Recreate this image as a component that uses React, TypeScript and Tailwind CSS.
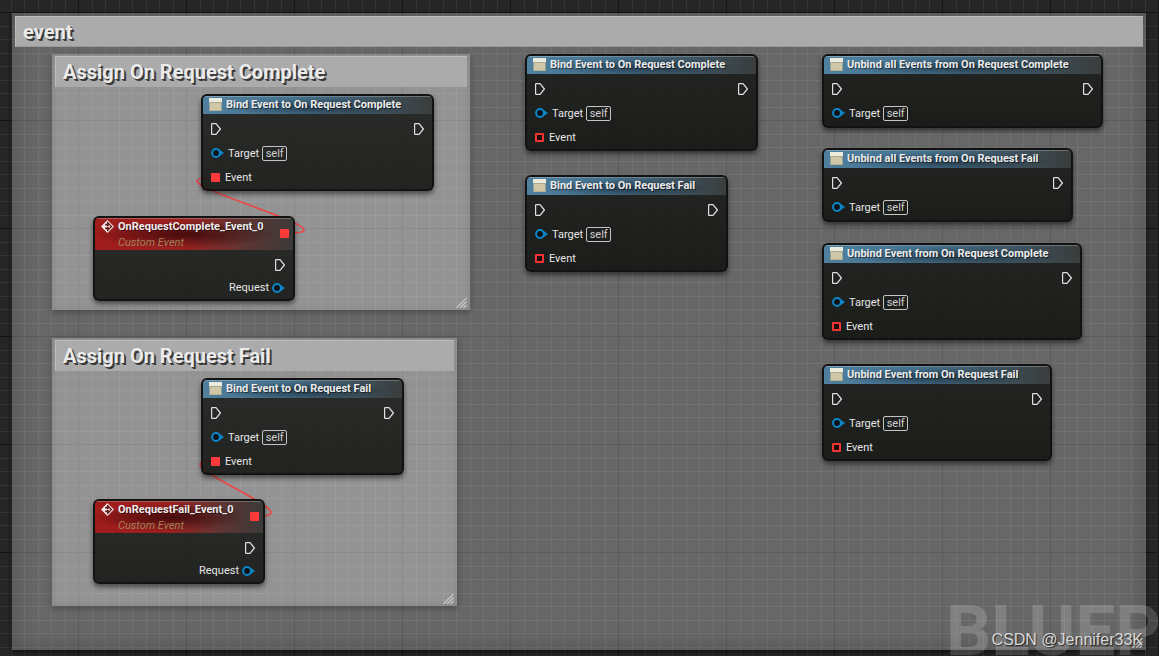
import React from "react";
import clsx from "clsx";

type CommentBoxProps = {
	title: string;
	className: string;
	nested?: boolean;
};

type CallNodeProps = {
	title: string;
	className: string;
	event?: "open" | "linked";
};

type EventNodeProps = {
	title: string;
	className: string;
};

// minor grid lines inside one 108px major cell
const MINOR = [14, 27, 41, 54, 68, 81, 95];

const Grid: React.FC = () => (
	<svg className="absolute inset-0 h-full w-full" aria-hidden="true">
		<defs>
			<pattern id="grid" x="78" y="12" width="108" height="108" patternUnits="userSpaceOnUse">
				{MINOR.map((n) => (
					<g key={n} fill="#353535">
						<rect x={n} y="0" width="1" height="108" />
						<rect x="0" y={n} width="108" height="1" />
					</g>
				))}
				<rect width="1" height="108" fill="#151515" />
				<rect width="108" height="1" fill="#151515" />
			</pattern>
		</defs>
		<rect width="100%" height="100%" fill="url(#grid)" />
	</svg>
);

const Wires: React.FC = () => (
	<svg
		className="absolute inset-0 h-full w-full"
		fill="none"
		stroke="#f04444"
		strokeWidth="1.6"
		aria-hidden="true">
		<path d="M290 233 C360 233 141 178 211 178" />
		<path d="M260 516 C312 516 159 461 211 461" />
	</svg>
);

const ExecPin: React.FC = () => (
	<svg className="h-3 w-[10px] shrink-0" viewBox="0 0 10 12" aria-hidden="true">
		<path
			d="M0.6 1.2Q0.6 0.6 1.2 0.6H5L9.4 6L5 11.4H1.2Q0.6 11.4 0.6 10.8Z"
			fill="none"
			stroke="#e0e0e0"
			strokeWidth="1.2"
			strokeLinejoin="round"
		/>
	</svg>
);

const ObjectPin: React.FC = () => (
	<svg className="h-[10px] w-[13px] shrink-0" viewBox="0 0 13 10" aria-hidden="true">
		<path d="M8.5 1.8L13 5L8.5 8.2Z" fill="#0b86c8" />
		<circle cx="5" cy="5" r="3.9" fill="#0c1216" stroke="#0b86c8" strokeWidth="2" />
	</svg>
);

const DelegatePin: React.FC<{ linked?: boolean }> = ({ linked }) => (
	<span
		className={clsx(
			"block size-[9px] shrink-0 rounded-[1px]",
			linked ? "bg-[#ff3a3a]" : "border-2 border-[#f53535] bg-[#1c0b0b]"
		)}
	/>
);

const FunctionIcon: React.FC = () => (
	<svg className="mt-px h-[13px] w-[13px] shrink-0" viewBox="0 0 13 13" aria-hidden="true">
		<path d="M0 0H13V4H0Z" fill="#ebebe0" />
		<path d="M0 4H13V5H0Z" fill="#aaa891" />
		<path d="M0.5 5H12.5V13H0.5Z" fill="#cfc7a6" />
		<path d="M0.5 12H12.5V13H0.5Z" fill="#b9b18f" />
	</svg>
);

const EventIcon: React.FC = () => (
	<svg className="mt-px h-[13px] w-[13px] shrink-0" viewBox="0 0 13 13" aria-hidden="true">
		<path
			d="M6.5 0.8L12.2 6.5L6.5 12.2L0.8 6.5Z"
			fill="#5a1212"
			stroke="#ead4d4"
			strokeWidth="1.2"
		/>
		<path d="M6 1L0.5 6.5L6 12V9.2H4.2V7.4H6V5.6H4.2V3.8H6Z" fill="#f4e8e8" />
		<path d="M6 5.9H7.6V4.3L9.8 6.5L7.6 8.7V7.1H6Z" fill="#dcb4b4" />
	</svg>
);

const ResizeHandle: React.FC = () => (
	<svg
		className="absolute right-[3px] bottom-[2px] h-[10px] w-[11px]"
		viewBox="0 0 11 10"
		stroke="#c8c8c8"
		strokeWidth="1.2"
		aria-hidden="true">
		<path d="M0.5 10L10.5 0M4 10L10.5 3.5M7.5 10L10.5 7" />
	</svg>
);

const CommentBox: React.FC<CommentBoxProps> = ({ title, className, nested }) => (
	<section
		className={clsx(
			"absolute px-[3px]",
			nested
				? "bg-white/29 pt-[2px] shadow-[0_2px_6px_rgba(0,0,0,0.3),inset_0_0_5px_rgba(70,70,70,0.25)]"
				: "bg-white/30 pt-[3px] shadow-[0_2px_6px_rgba(0,0,0,0.6),inset_0_0_24px_rgba(30,30,30,0.3)]",
			className
		)}>
		<h2
			className={clsx(
				"h-[31px] border-t border-l border-[#bcbcbc] bg-[#ababab] pl-[7px] text-[20px] leading-[31px] font-bold text-[#ebebeb] [text-shadow:1px_1px_0_#3a3a3a,2px_2px_0_#3a3a3a]",
				!nested && "border-b border-b-[#9a9a9a]"
			)}>
			{title}
		</h2>
		<ResizeHandle />
	</section>
);

const NODE =
	"absolute overflow-hidden rounded-[6px] border-2 border-[#101110]/90 bg-linear-to-b from-[#191b19]/86 to-[#0f110e]/86 shadow-[0_3px_5px_rgba(0,0,0,0.5)]";

const CallNode: React.FC<CallNodeProps> = ({ title, className, event }) => (
	<article className={clsx(NODE, className)}>
		<header className="flex h-[18px] items-start gap-1 border-t border-white/25 bg-[radial-gradient(ellipse_at_50%_60%,rgba(16,28,38,0.6),transparent_60%),linear-gradient(to_right,#50809f,#44708c_40%,#3c4a52_85%,#3a3d3c)] pl-[6px]">
			<FunctionIcon />
			<h3 className="text-[11px] leading-4 font-bold whitespace-nowrap text-[#ececec] [text-shadow:1px_1px_0_rgba(0,0,0,0.5)]">
				{title}
			</h3>
		</header>
		<div className={clsx("px-2 pt-[3px] text-[11px] text-[#e6e6e6]", !event && "pb-px")}>
			<div className="flex h-6 items-center justify-between">
				<ExecPin />
				<ExecPin />
			</div>
			<div className="flex h-6 items-center">
				<ObjectPin />
				<span className="ml-1 pt-[2px]">Target</span>
				<span className="mt-px ml-[3px] flex h-[15px] w-[25px] items-center justify-center rounded-[2px] border border-[#c4c4c4] pt-[2px] text-[#d0d0d0]">
					self
				</span>
			</div>
			{event && (
				<div className="flex h-6 items-center gap-[5px]">
					<DelegatePin linked={event === "linked"} />
					<span className="pt-[2px]">Event</span>
				</div>
			)}
		</div>
	</article>
);

const EventNode: React.FC<EventNodeProps> = ({ title, className }) => (
	<article className={clsx(NODE, className)}>
		<header className="flex h-8 items-start justify-between border-t border-white/25 bg-[radial-gradient(ellipse_at_45%_50%,rgba(40,4,4,0.75),transparent_60%),linear-gradient(to_right,#a01c1c,#98201f_45%,#5e3533_75%,#3b3a39)] pr-1 pl-[6px]">
			<div className="flex gap-1">
				<EventIcon />
				<div className="text-[11px] leading-4 whitespace-nowrap">
					<h3 className="font-bold text-[#ececec] [text-shadow:1px_1px_0_rgba(0,0,0,0.5)]">{title}</h3>
					<p className="text-[#a5805a] italic">Custom Event</p>
				</div>
			</div>
			<div className="pt-[10px]">
				<DelegatePin linked />
			</div>
		</header>
		<div className="flex flex-col items-end px-2 pt-[3px] text-[11px] text-[#e6e6e6]">
			<div className="flex h-6 items-center">
				<ExecPin />
			</div>
			<div className="flex h-[22px] items-center gap-[3px]">
				<span className="pt-px">Request</span>
				<ObjectPin />
			</div>
		</div>
	</article>
);

export default function App() {
	return (
		<main className="relative h-screen w-full overflow-hidden bg-[#262626] font-[Roboto,sans-serif]">
			<Grid />

			<CommentBox title="event" className="top-[13px] right-[13px] bottom-[6px] left-3" />
			<CommentBox
				title="Assign On Request Complete"
				className="top-[54px] left-[52px] h-[256px] w-[418px]"
				nested
			/>
			<CommentBox
				title="Assign On Request Fail"
				className="top-[338px] left-[52px] h-[268px] w-[405px]"
				nested
			/>

			<Wires />

			<CallNode
				title="Bind Event to On Request Complete"
				className="top-[94px] left-[201px] w-[233px]"
				event="linked"
			/>
			<EventNode title="OnRequestComplete_Event_0" className="top-[216px] left-[93px] w-[202px]" />
			<CallNode
				title="Bind Event to On Request Fail"
				className="top-[378px] left-[201px] w-[203px]"
				event="linked"
			/>
			<EventNode title="OnRequestFail_Event_0" className="top-[499px] left-[93px] w-[172px]" />

			<CallNode
				title="Bind Event to On Request Complete"
				className="top-[54px] left-[525px] w-[233px]"
				event="open"
			/>
			<CallNode
				title="Bind Event to On Request Fail"
				className="top-[175px] left-[525px] w-[203px]"
				event="open"
			/>

			<CallNode
				title="Unbind all Events from On Request Complete"
				className="top-[54px] left-[822px] w-[281px]"
			/>
			<CallNode
				title="Unbind all Events from On Request Fail"
				className="top-[148px] left-[822px] w-[251px]"
			/>
			<CallNode
				title="Unbind Event from On Request Complete"
				className="top-[243px] left-[822px] w-[260px]"
				event="open"
			/>
			<CallNode
				title="Unbind Event from On Request Fail"
				className="top-[364px] left-[822px] w-[230px]"
				event="open"
			/>

			<div className="absolute top-[595px] left-[946px] text-[71px] leading-[71px] font-bold text-white/17">
				BLUEP
			</div>
			<div className="absolute right-4 bottom-1 font-['Liberation_Sans',sans-serif] text-[16px] leading-6 text-[#d8d8d8] [text-shadow:1px_1px_1px_rgba(0,0,0,0.6)]">
				CSDN @Jennifer33K
			</div>
		</main>
	);
}
